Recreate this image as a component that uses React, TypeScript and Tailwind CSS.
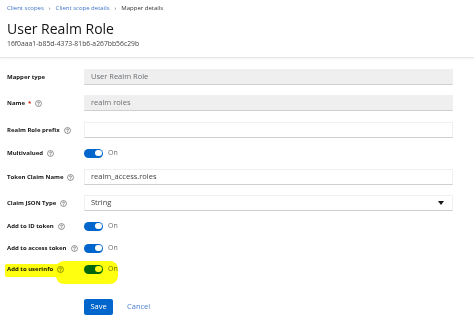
const font = { fontFamily: '"Open Sans", "Liberation Sans", sans-serif' };

function Help() {
  return (
    <svg width="7" height="7" viewBox="0 0 16 16" className="ml-[4px] shrink-0 text-[#4f5255]">
      <circle cx="8" cy="8" r="6.8" fill="none" stroke="currentColor" strokeWidth="1.4" />
      <path d="M6 6.3a2 2 0 1 1 2.6 1.9c-.4.2-.6.5-.6 1v.6" fill="none" stroke="currentColor" strokeWidth="1.4" strokeLinecap="round" />
      <circle cx="8" cy="11.6" r="0.9" fill="currentColor" />
    </svg>
  );
}

function Label({ text, required }: { text: string; required?: boolean }) {
  return (
    <div className="w-[77px] shrink-0 flex items-center text-[6px] font-bold text-[#151515] leading-none whitespace-nowrap">
      {text}
      {required && <span className="ml-[3px] text-[#c9190b] text-[6px]">*</span>}
      {text !== "Mapper type" && <Help />}
    </div>
  );
}

function Input({ value, disabled, select }: { value: string; disabled?: boolean; select?: boolean }) {
  return (
    <div
      className={
        "w-[369px] h-[16px] flex items-center px-[6px] text-[7.5px] border border-[#f0f0f0] border-b-[#cfcfcf] " +
        (disabled ? "bg-[#efefef] text-[#6a6e73]" : "bg-white text-[#444]")
      }
    >
      <span className="flex-1">{value}</span>
      {select && (
        <svg width="6" height="4" viewBox="0 0 6 4" className="mr-[2px]">
          <path d="M0 0h6L3 4z" fill="#151515" />
        </svg>
      )}
    </div>
  );
}

function Toggle() {
  return (
    <div className="flex items-center">
      <div className="w-[19px] h-[9px] rounded-full bg-[#0066cc] flex items-center justify-end pr-[1.5px]">
        <div className="w-[6.5px] h-[6.5px] rounded-full bg-white" />
      </div>
      <span className="ml-[5px] text-[7px] text-[#6a6e73]">On</span>
    </div>
  );
}

function Row({ label, required, children, className }: { label: string; required?: boolean; children: React.ReactNode; className?: string }) {
  return (
    <div className={"flex items-center " + (className ?? "")}>
      <Label text={label} required={required} />
      {children}
    </div>
  );
}

export default function App() {
  return (
    <div className="w-[474px] h-[327px] bg-white overflow-hidden" style={font}>
      <div className="px-[7px] pt-[4px] pb-[8px] border-b border-[#e6e6e6] shadow-[0_1px_2px_rgba(0,0,0,0.05)]">
        <div className="flex items-center text-[6px] h-[9px] gap-[5px]">
          <span className="text-[#3f73c9]">Client scopes</span>
          <span className="text-[#555] text-[6px]">›</span>
          <span className="text-[#3f73c9]">Client scope details</span>
          <span className="text-[#555] text-[6px]">›</span>
          <span className="text-[#333]">Mapper details</span>
        </div>
        <div className="mt-[8px] text-[14px] leading-[16px] text-[#151515]">User Realm Role</div>
        <div className="mt-[2px] text-[6.8px] leading-[10px] text-[#444]">16f0aaa1-b85d-4373-81b6-a267bb56c29b</div>
      </div>

      <div className="relative px-[7px] pt-[11px]">
        <Row label="Mapper type">
          <Input value="User Realm Role" disabled />
        </Row>
        <Row label="Name" required className="mt-[10px]">
          <Input value="realm roles" disabled />
        </Row>
        <Row label="Realm Role prefix" className="mt-[11px]">
          <Input value="" />
        </Row>
        <Row label="Multivalued" className="mt-[10px] h-[10px]">
          <Toggle />
        </Row>
        <Row label="Token Claim Name" className="mt-[11px]">
          <Input value="realm_access.roles" />
        </Row>
        <Row label="Claim JSON Type" className="mt-[10px]">
          <Input value="String" select />
        </Row>
        <Row label="Add to ID token" className="mt-[10px] h-[10px]">
          <Toggle />
        </Row>
        <Row label="Add to access token" className="mt-[12px] h-[10px]">
          <Toggle />
        </Row>
        <Row label="Add to userinfo" className="mt-[11px] h-[10px]">
          <Toggle />
        </Row>

        <div className="flex items-center mt-[25px] pl-[77px]">
          <button className="w-[29px] h-[16px] rounded-[2px] bg-[#0066cc] text-white text-[7.5px]">Save</button>
          <button className="ml-[14px] text-[7.5px] text-[#4d7fcf]">Cancel</button>
        </div>

        {/* highlighter marks */}
        <div className="absolute left-[5px] top-[206px] w-[58px] h-[13px] bg-[#ffff10] mix-blend-multiply rounded-[2px]" />
        <div className="absolute left-[56px] top-[203px] w-[62px] h-[23px] bg-[#ffff10] mix-blend-multiply rounded-[8px]" />
      </div>
    </div>
  );
}
